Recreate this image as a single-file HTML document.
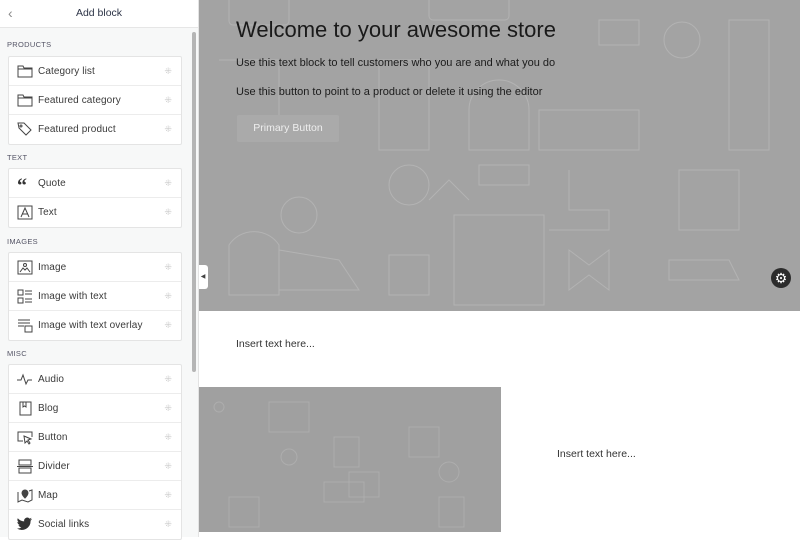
<!DOCTYPE html>
<html><head><style>
*{box-sizing:border-box;margin:0;padding:0}
body{width:800px;height:537px;overflow:hidden;font-family:"Liberation Sans",sans-serif;background:#fff;position:relative}
#side{position:absolute;left:0;top:0;width:199px;height:537px;background:#f7f8f8;border-right:1px solid #e3e3e3}
#hdr{height:28px;background:#fff;border-bottom:1px solid #e6e6e6;text-align:center;font-size:10.5px;line-height:27px;color:#2d3447;position:relative}
#hdr span{position:absolute;left:8px;top:0;color:#888;font-size:14px}
.lab{position:absolute;left:7px;font-size:7.5px;color:#556;letter-spacing:.3px}
.card{position:absolute;left:8px;width:174px;background:#fff;border:1px solid #e4e4e4;border-radius:2px}
.row{height:29px;border-bottom:1px solid #ececec;position:relative;font-size:10px;color:#3a3a3a;line-height:29px;padding-left:29px;letter-spacing:.1px}
.row:last-child{border-bottom:none}
.row svg{position:absolute;left:8px;top:7px}
.row:after{content:"⁜";position:absolute;right:9px;top:0;color:#ccc;font-size:9px}
#sb{position:absolute;left:192px;top:32px;width:4px;height:340px;background:#b5b5b5;border-radius:2px}
#hero{position:absolute;left:199px;top:0;width:601px;height:311px;background:#a3a3a3;overflow:hidden}
h1{position:absolute;left:37px;top:17px;font-weight:normal;font-size:22px;color:#1a1a1a}
.p{position:absolute;left:37px;font-size:11px;color:#1c1c1c}
#btn{position:absolute;left:38px;top:115px;width:102px;height:27px;background:#aaa;color:#eee;font-size:10.5px;line-height:27px;text-align:center;border-radius:2px}
#gear{position:absolute;left:771px;top:268px;width:20px;height:20px;border-radius:50%;background:#2c2c2c;color:#fff;font-size:14px;line-height:20px;text-align:center}
#tab{position:absolute;left:198px;top:265px;width:10px;height:24px;background:#fff;border-radius:0 3px 3px 0;font-size:6px;line-height:24px;color:#444;text-align:center}
.it{position:absolute;font-size:10.5px;color:#333}
#img2{position:absolute;left:199px;top:387px;width:302px;height:145px;background:#a0a0a0}
</style></head><body>
<div id="hero">
<svg width="601" height="311" style="position:absolute;left:0;top:0" fill="none" stroke="#b3b3b3" stroke-width="1">
<rect x="30" y="-5" width="60" height="30" rx="4"/><rect x="230" y="-5" width="80" height="25" rx="4"/><rect x="400" y="20" width="40" height="25"/><circle cx="483" cy="40" r="18"/><path d="M530 20 l40 0 0 130 -40 0z"/>
<path d="M20 60 l60 0 0 80"/><rect x="180" y="60" width="50" height="90"/><path d="M270 110 a30 30 0 0 1 60 0 v40 h-60z"/><path d="M340 110 h100 v40 h-100z"/><circle cx="210" cy="185" r="20"/><rect x="280" y="165" width="50" height="20"/><path d="M480 170 h60 v60 h-60z"/><path d="M370 170 v40 h40 v20 h-60"/>
<path d="M30 245 a30 30 0 0 1 50 0 v50 h-50z"/><path d="M80 250 v40 h80 l-20 -30z"/><rect x="190" y="255" width="40" height="40"/><rect x="255" y="215" width="90" height="90"/><path d="M370 250 l20 15 20 -15 v40 l-20 -15 -20 15z"/><path d="M470 260 h60 l10 20 h-70z"/><circle cx="100" cy="215" r="18"/><path d="M230 200 l20 -20 20 20"/>
</svg>
<h1>Welcome to your awesome store</h1>
<div class="p" style="top:57px">Use this text block to tell customers who you are and what you do</div>
<div class="p" style="top:86px">Use this button to point to a product or delete it using the editor</div>
<div id="btn">Primary Button</div>
</div>
<div id="gear">⚙</div>
<div id="tab">◀</div>
<div class="it" style="left:236px;top:338px">Insert text here...</div>
<div id="img2"><svg width="302" height="145" fill="none" stroke="#adadad"><rect x="70" y="15" width="40" height="30"/><rect x="135" y="50" width="25" height="30"/><rect x="150" y="85" width="30" height="25"/><rect x="30" y="110" width="30" height="30"/><rect x="125" y="95" width="40" height="20"/><rect x="210" y="40" width="30" height="30"/><rect x="240" y="110" width="25" height="30"/><circle cx="90" cy="70" r="8"/><circle cx="250" cy="85" r="10"/><circle cx="20" cy="20" r="5"/></svg></div>
<div class="it" style="left:557px;top:448px">Insert text here...</div>

<div id="side">
<div id="hdr"><span>‹</span>Add block</div>
<div class="lab" style="top:40px">PRODUCTS</div>
<div class="card" style="top:56px">
<div class="row"><svg width="16" height="14" fill="none" stroke="#444"><path d="M1 2h5l1 2h8v9H1z M1 5h14"/></svg>Category list</div>
<div class="row"><svg width="16" height="14" fill="none" stroke="#444"><path d="M1 2h5l1 2h8v9H1z M1 5h14"/></svg>Featured category</div>
<div class="row"><svg width="16" height="14" fill="none" stroke="#444"><path d="M1 1h6l7 7-5 5-7-7z"/><circle cx="4" cy="4" r="1"/></svg>Featured product</div>
</div>
<div class="lab" style="top:153px">TEXT</div>
<div class="card" style="top:168px">
<div class="row"><svg width="16" height="14"><text x="0" y="16" font-size="20" font-weight="bold" fill="#333" font-family="Liberation Serif">“</text></svg>Quote</div>
<div class="row"><svg width="16" height="15" fill="none" stroke="#444"><rect x="1" y="1" width="14" height="13"/><path d="M4 12l4-9 4 9M5.5 9h5"/></svg>Text</div>
</div>
<div class="lab" style="top:237px">IMAGES</div>
<div class="card" style="top:252px">
<div class="row"><svg width="16" height="15" fill="none" stroke="#444"><rect x="1" y="1" width="14" height="13"/><circle cx="8" cy="5" r="1.5"/><path d="M3 12l3-4 2 2 2-2 3 4"/></svg>Image</div>
<div class="row"><svg width="16" height="15" fill="none" stroke="#444"><rect x="1" y="1" width="5" height="5"/><rect x="1" y="9" width="5" height="5"/><path d="M8 2h7M8 5h7M8 10h7M8 13h7"/></svg>Image with text</div>
<div class="row"><svg width="16" height="15" fill="none" stroke="#444"><path d="M1 2h12M1 5h12M1 8h6"/><rect x="8" y="8" width="7" height="6"/></svg>Image with text overlay</div>
</div>
<div class="lab" style="top:349px">MISC</div>
<div class="card" style="top:364px">
<div class="row"><svg width="16" height="14" fill="none" stroke="#444"><path d="M0 8h4l2-5 3 9 2-4h4"/></svg>Audio</div>
<div class="row"><svg width="16" height="15" fill="none" stroke="#444"><rect x="3" y="1" width="11" height="13"/><path d="M6 1v5l1.5-1 1.5 1V1"/></svg>Blog</div>
<div class="row"><svg width="16" height="15" fill="none" stroke="#444"><path d="M6 11H1V2h14v5M7 6l7 3-3 1 2 3-1 1-2-3-2 2z"/></svg>Button</div>
<div class="row"><svg width="16" height="15" fill="none" stroke="#444"><rect x="2" y="1" width="12" height="5"/><rect x="2" y="9" width="12" height="5"/><path d="M0 7.5h16"/></svg>Divider</div>
<div class="row"><svg width="16" height="15" fill="none" stroke="#444"><path d="M1 4v10l4-2 6 2 4-2V2l-3 1"/><path d="M8 10s-3-3-3-5a3 3 0 0 1 6 0c0 2-3 5-3 5z" fill="#444"/></svg>Map</div>
<div class="row"><svg width="16" height="14"><path d="M15 2c-.6.3-1.2.4-1.8.5.6-.4 1.1-1 1.3-1.7-.6.4-1.3.6-2 .8A3.1 3.1 0 0 0 7.2 4.4 8.8 8.8 0 0 1 .8 1.2a3.1 3.1 0 0 0 1 4.1c-.5 0-1-.2-1.4-.4 0 1.5 1.1 2.8 2.5 3.1-.5.1-1 .2-1.4.1.4 1.2 1.6 2.1 2.9 2.1A6.2 6.2 0 0 1 0 11.5 8.8 8.8 0 0 0 13.6 4v-.4c.6-.4 1.1-1 1.4-1.6z" fill="#333"/></svg>Social links</div>
</div>
<div id="sb"></div>
</div>
</body></html>
